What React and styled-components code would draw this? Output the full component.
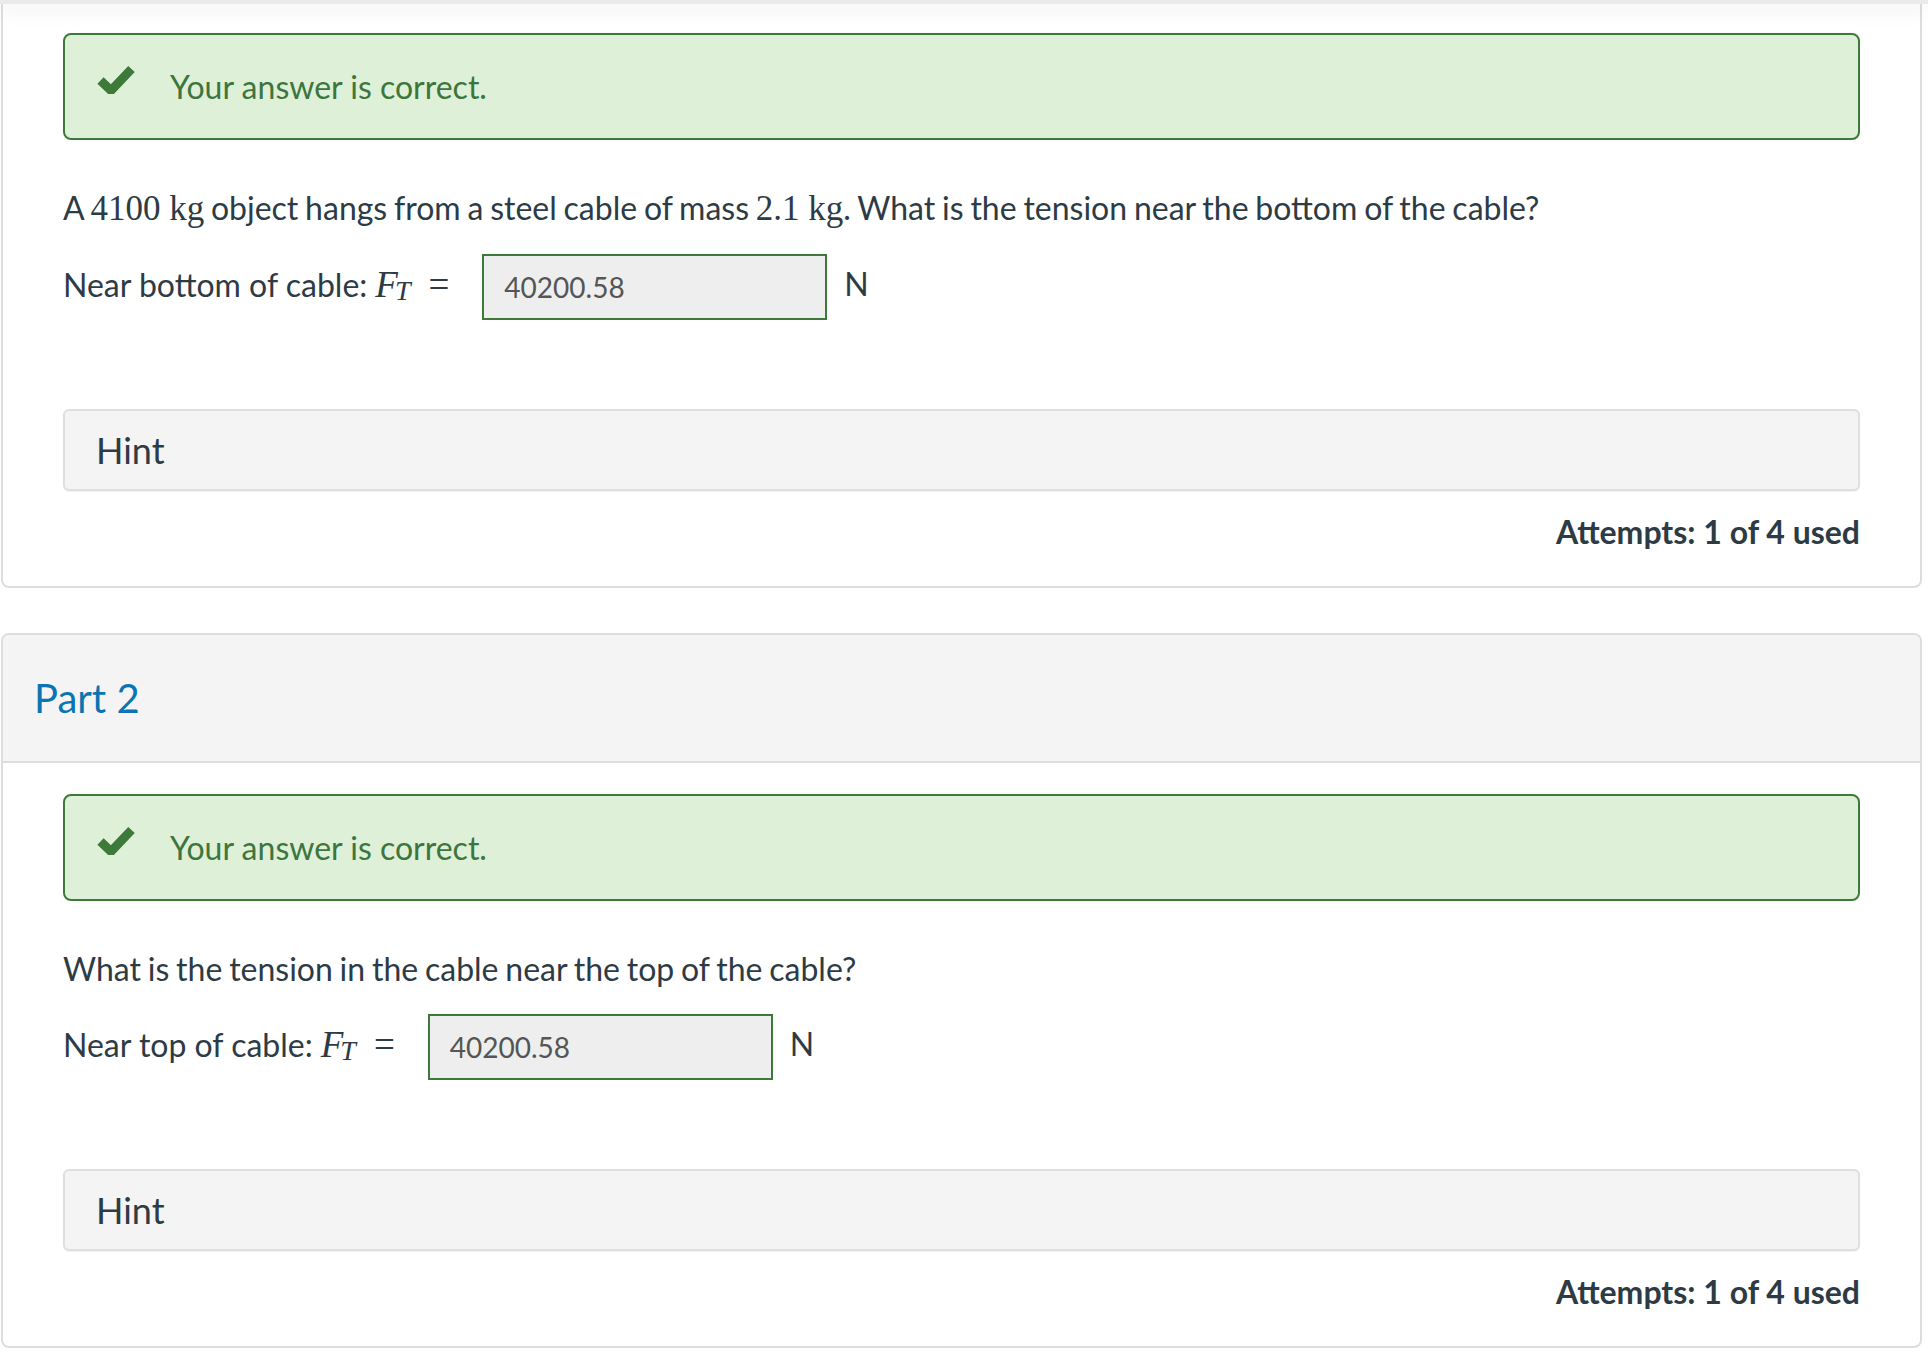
import React from "react";
import styled, { createGlobalStyle } from "styled-components";

const GlobalStyle = createGlobalStyle`
  html, body {
    margin: 0;
    padding: 0;
    background: #ffffff;
  }
  body {
    font-family: Lato, "Noto Sans", sans-serif;
    color: #2d3b45;
    -webkit-font-smoothing: antialiased;
  }
`;

/* thin page header that sits over the scrolled content */
const TopShade = styled.div`
  position: fixed;
  top: 0;
  left: 0;
  right: 0;
  height: 4px;
  background: #eaeaea;
  box-shadow: 0 6px 18px rgba(0, 0, 0, 0.14);
  z-index: 5;
`;

const Page = styled.div`
  display: flex;
  flex-direction: column;
  gap: 45px;
  padding: 0 6px 0 1px;
`;

const Card = styled.section`
  border: 2px solid #dddddd;
  border-radius: ${(p) => (p.$cutTop ? "0 0 8px 8px" : "8px")};
  background: #ffffff;
  overflow: hidden;
`;

const PartHeader = styled.div`
  height: 126px;
  display: flex;
  align-items: center;
  padding: 0 31px;
  background: #f4f4f4;
  border-bottom: 2px solid #dddddd;
`;

const PartTitle = styled.h2`
  margin: 0;
  font-family: Lato, sans-serif;
  font-weight: 400;
  font-size: 40px;
  color: #0c74b2;
`;

const CardBody = styled.div`
  padding: 31px 60px 30px;
  display: flex;
  flex-direction: column;
`;

const SuccessBox = styled.div`
  height: 103px;
  display: flex;
  align-items: center;
  padding: 0 31px;
  gap: 34px;
  background: #dff0d8;
  border: 2px solid #3d7a3a;
  border-radius: 8px;
`;

const CheckIcon = styled.svg`
  width: 40px;
  height: 31px;
  margin-bottom: 16px;
  flex: none;
`;

const SuccessText = styled.span`
  font-size: 32px;
  color: #3c763d;
`;

const Question = styled.p`
  margin: 44px 0 0;
  font-size: 32px;
  line-height: 48px;
  word-spacing: -1.4px;
`;

const MathNum = styled.span`
  font-family: "Liberation Serif", "DejaVu Serif", serif;
  font-size: 35px;
  word-spacing: 0;
`;

const AnswerRow = styled.div`
  margin-top: 21px;
  display: flex;
  align-items: center;
  font-size: 32px;
`;

const Label = styled.span`
  margin-bottom: 6px;
`;

const MathVar = styled.span`
  font-family: "Liberation Serif", "DejaVu Serif", serif;
  font-style: italic;
  font-size: 37px;
  margin: 0 0 6px 8px;
`;

const MathSub = styled.span`
  font-family: "Liberation Serif", "DejaVu Serif", serif;
  font-style: italic;
  font-size: 28px;
  margin: 8px 0 0 -3px;
`;

const MathEq = styled.span`
  font-family: "Liberation Serif", "DejaVu Serif", serif;
  font-size: 37px;
  margin: 0 0 6px 18px;
`;

const AnswerInput = styled.div`
  width: 341px;
  height: 62px;
  margin-left: 33px;
  box-sizing: content-box;
  display: flex;
  align-items: center;
  background: #eeeeee;
  border: 2px solid #3d7a3a;
  font-size: 28px;
  color: #555555;

  span {
    padding-left: 20px;
  }
`;

const Unit = styled.span`
  margin-left: 17px;
  margin-top: -8px;
`;

const HintBar = styled.div`
  margin-top: 89px;
  height: 78px;
  display: flex;
  align-items: center;
  padding: 0 31px;
  background: #f4f4f4;
  border: 2px solid #dfdfdf;
  border-radius: 6px;
  box-shadow: 0 1px 1px rgba(0, 0, 0, 0.06);
  font-size: 36px;
`;

const Attempts = styled.div`
  margin-top: 17px;
  text-align: right;
  font-size: 32px;
  line-height: 48px;
  font-weight: 700;
`;

function Check() {
  return (
    <CheckIcon viewBox="0 0 40 31">
      <polyline
        points="4.5,17.5 15,27.5 35.5,6"
        fill="none"
        stroke="#3d7a3a"
        strokeWidth="9"
        strokeLinejoin="miter"
      />
    </CheckIcon>
  );
}

function Feedback() {
  return (
    <SuccessBox>
      <Check />
      <SuccessText>Your answer is correct.</SuccessText>
    </SuccessBox>
  );
}

function Answer({ label, value }) {
  return (
    <AnswerRow>
      <Label>{label}</Label>
      <MathVar>F</MathVar>
      <MathSub>T</MathSub>
      <MathEq>=</MathEq>
      <AnswerInput>
        <span>{value}</span>
      </AnswerInput>
      <Unit>N</Unit>
    </AnswerRow>
  );
}

function Footer() {
  return (
    <>
      <HintBar>Hint</HintBar>
      <Attempts>Attempts: 1 of 4 used</Attempts>
    </>
  );
}

export default function App() {
  return (
    <>
      <GlobalStyle />
      <TopShade />
      <Page>
        <Card $cutTop>
          <CardBody>
            <Feedback />
            <Question>
              A <MathNum>4100 kg</MathNum> object hangs from a steel cable of
              mass <MathNum>2.1 kg</MathNum>. What is the tension near the
              bottom of the cable?
            </Question>
            <Answer label="Near bottom of cable:" value="40200.58" />
            <Footer />
          </CardBody>
        </Card>
        <Card>
          <PartHeader>
            <PartTitle>Part 2</PartTitle>
          </PartHeader>
          <CardBody>
            <Feedback />
            <Question>
              What is the tension in the cable near the top of the cable?
            </Question>
            <Answer label="Near top of cable:" value="40200.58" />
            <Footer />
          </CardBody>
        </Card>
      </Page>
    </>
  );
}
